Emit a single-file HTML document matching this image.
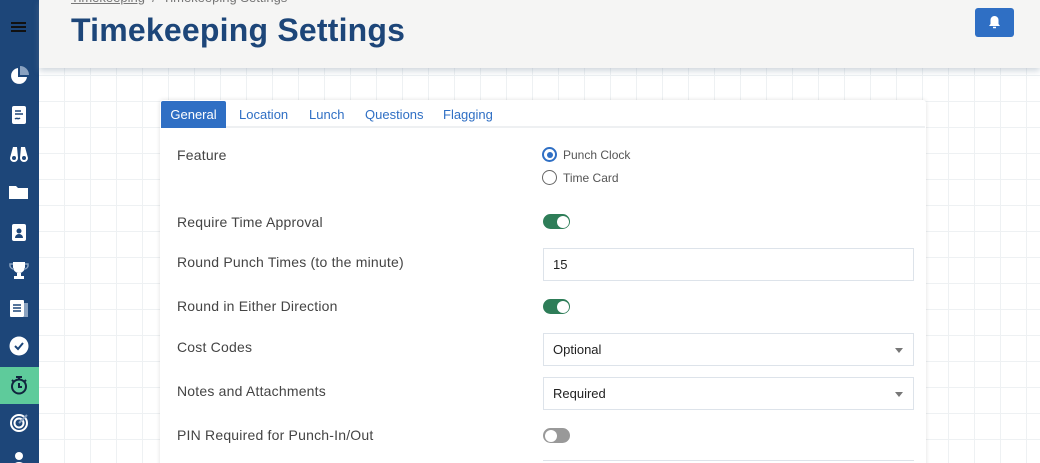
<!DOCTYPE html>
<html style="width:1040px;height:463px;overflow:hidden"><head><meta charset="utf-8"><style>
*{margin:0;padding:0;box-sizing:border-box}
body{width:1040px;height:463px;overflow:hidden;position:relative;font-family:"Liberation Sans",sans-serif;
background-color:#fff;background-image:linear-gradient(#eef1f3 1px,transparent 1px),linear-gradient(90deg,#eef1f3 1px,transparent 1px);background-size:26px 26px;background-position:12px 23px}
.abs{position:absolute}
#side{left:0;top:0;width:39px;height:463px;background:#1d4679}
#hdr{left:39px;top:0;width:1001px;height:68px;background:#f5f5f4;box-shadow:0 3px 6px rgba(120,140,160,.35)}
h1{position:absolute;left:71px;top:12px;font-size:32px;font-weight:900;color:#1d4679;letter-spacing:.2px}
.crumb{left:71px;top:-10px;font-size:13px;color:#777}
#bell{left:975px;top:8px;width:39px;height:29px;background:#2f6fc4;border-radius:3px}
#card{left:160px;top:100px;width:766px;height:380px;background:#fff;box-shadow:0 0 5px rgba(0,0,0,.12);border-radius:3px}
.tabs{left:161px;top:101px;height:27px;width:764px;border-bottom:2px solid #eef0f2}
.tab{position:absolute;top:0;height:27px;line-height:27px;font-size:13px;color:#2f6fc4}
.lbl{position:absolute;left:177px;font-size:14px;color:#444;letter-spacing:.2px}
.inp{position:absolute;left:543px;width:371px;height:33px;border:1px solid #dde3ea;font-size:13px;padding-left:9px;line-height:31px;color:#222}
.car{position:absolute;right:10px;top:14px;border:4px solid transparent;border-top:5px solid #777}
.tog{position:absolute;left:543px;width:27px;height:15px;border-radius:8px}
.tog i{position:absolute;top:1.5px;width:12px;height:12px;border-radius:6px;background:#fff}
.ic{position:absolute;left:9px;width:20px;height:20px}
</style></head><body>
<div id="side" class="abs">
<div class="abs" style="left:11px;top:22px;width:15px;height:2px;background:#111;box-shadow:0 4px #111,0 8px #111"></div>
<svg class="ic" style="top:66px" viewBox="0 0 20 20"><path d="M9 2A8 8 0 1 0 18 11H9z" fill="#fff"/><path d="M11 0v9h9A9 9 0 0 0 11 0z" fill="#8aa2c0"/></svg>
<svg class="ic" style="top:105px" viewBox="0 0 20 20"><rect x="3" y="1" width="14" height="18" rx="2" fill="#fff"/><path d="M6 6h6M6 9h8M6 14c2-2 3 1 5-1" stroke="#1d4679" stroke-width="1.5" fill="none"/></svg>
<svg class="ic" style="top:143px" viewBox="0 0 20 20"><path d="M1 15a4 4 0 0 0 8 0L8 4H4zM11 15a4 4 0 0 0 8 0L16 4h-4z" fill="#fff"/><circle cx="5" cy="15" r="2" fill="#1d4679"/><circle cx="15" cy="15" r="2" fill="#1d4679"/></svg>
<svg class="ic" style="top:182px" viewBox="0 0 20 20"><path d="M0 4h7l2 2h10v11H0z" fill="#fff"/></svg>
<svg class="ic" style="top:222px" viewBox="0 0 20 20"><rect x="3" y="2" width="14" height="17" rx="2" fill="#fff"/><circle cx="10" cy="9" r="2.5" fill="#1d4679"/><path d="M6 16a4 4 0 0 1 8 0z" fill="#1d4679"/></svg>
<svg class="ic" style="top:260px" viewBox="0 0 20 20"><path d="M4 2h12v5a6 6 0 0 1-12 0zM8 13h4v3h3v3H5v-3h3z" fill="#fff"/><path d="M4 4H1v2a4 4 0 0 0 4 3M16 4h3v2a4 4 0 0 1-4 3" stroke="#8aa2c0" fill="none" stroke-width="1.5"/></svg>
<svg class="ic" style="top:298px" viewBox="0 0 20 20"><rect x="1" y="2" width="14" height="17" rx="1" fill="#fff"/><rect x="15" y="5" width="4" height="14" fill="#8aa2c0"/><path d="M4 7h8M4 10h8M4 13h8" stroke="#1d4679" stroke-width="1.6"/></svg>
<svg class="ic" style="top:336px" viewBox="0 0 20 20"><circle cx="10" cy="10" r="9.5" fill="#fff"/><path d="M6 10l3 3 5-6" stroke="#1d4679" stroke-width="2" fill="none"/></svg>
<div class="abs" style="left:0;top:367px;width:39px;height:37px;background:#5ecb9b"></div>
<svg class="ic" style="top:375px" viewBox="0 0 20 20"><circle cx="10" cy="11.5" r="7" stroke="#10253e" stroke-width="2" fill="none"/><path d="M7 2h6M10 2v3M10 8v4h3M3 5l2 2M17 5l-2 2" stroke="#10253e" stroke-width="2" fill="none"/></svg>
<svg class="ic" style="top:413px" viewBox="0 0 20 20"><circle cx="10" cy="10" r="8" stroke="#fff" stroke-width="2" fill="none"/><circle cx="10" cy="10" r="4.5" stroke="#fff" stroke-width="2" fill="none"/><path d="M10 10l8-8" stroke="#8aa2c0" stroke-width="2"/></svg>
<svg class="ic" style="top:450px" viewBox="0 0 20 20"><circle cx="10" cy="6" r="4" fill="#fff"/><path d="M2 20a8 8 0 0 1 16 0z" fill="#fff"/></svg>
</div>
<div id="hdr" class="abs"></div>
<div class="abs crumb"><u>Timekeeping</u> &nbsp;/&nbsp; Timekeeping Settings</div>
<h1>Timekeeping Settings</h1>
<div id="bell" class="abs"><svg class="abs" style="left:13px;top:7px" width="13" height="15" viewBox="0 0 13 15"><path d="M6.5 1a4 4 0 0 0-4 4v4L1 11h11l-1.5-2V5a4 4 0 0 0-4-4z" fill="#fff"/><path d="M5 12.5h3" stroke="#fff" stroke-width="1.5"/></svg></div>
<div id="card" class="abs"></div>
<div class="abs tabs">
<div class="tab" style="left:0;width:65px;background:#2f6fc4;color:#fff;text-align:center;border-radius:2px 2px 0 0">General</div>
<div class="tab" style="left:78px">Location</div>
<div class="tab" style="left:148px">Lunch</div>
<div class="tab" style="left:204px">Questions</div>
<div class="tab" style="left:282px">Flagging</div>
</div>
<div class="lbl" style="top:147px">Feature</div>
<div class="lbl" style="top:214px">Require Time Approval</div>
<div class="lbl" style="top:254px">Round Punch Times (to the minute)</div>
<div class="lbl" style="top:298px">Round in Either Direction</div>
<div class="lbl" style="top:339px">Cost Codes</div>
<div class="lbl" style="top:383px">Notes and Attachments</div>
<div class="lbl" style="top:427px">PIN Required for Punch-In/Out</div>
<div class="abs" style="left:542px;top:147px;width:15px;height:15px;border:2px solid #2f6fc4;border-radius:50%"><div class="abs" style="left:2.5px;top:2.5px;width:6px;height:6px;border-radius:50%;background:#2f6fc4"></div></div>
<div class="abs" style="left:563px;top:148px;font-size:12px;color:#555">Punch Clock</div>
<div class="abs" style="left:542px;top:170px;width:15px;height:15px;border:1.5px solid #666;border-radius:50%"></div>
<div class="abs" style="left:563px;top:171px;font-size:12px;color:#555">Time Card</div>
<div class="tog" style="top:214px;background:#2e7d58"><i style="left:13.5px"></i></div>
<div class="inp" style="top:248px">15</div>
<div class="tog" style="top:299px;background:#2e7d58"><i style="left:13.5px"></i></div>
<div class="inp" style="top:333px">Optional<span class="car"></span></div>
<div class="inp" style="top:377px">Required<span class="car"></span></div>
<div class="tog" style="top:428px;background:#999"><i style="left:1.5px"></i></div>
<div class="abs" style="left:543px;top:460px;width:371px;height:3px;border-top:1px solid #dde3ea"></div>
</body></html>
